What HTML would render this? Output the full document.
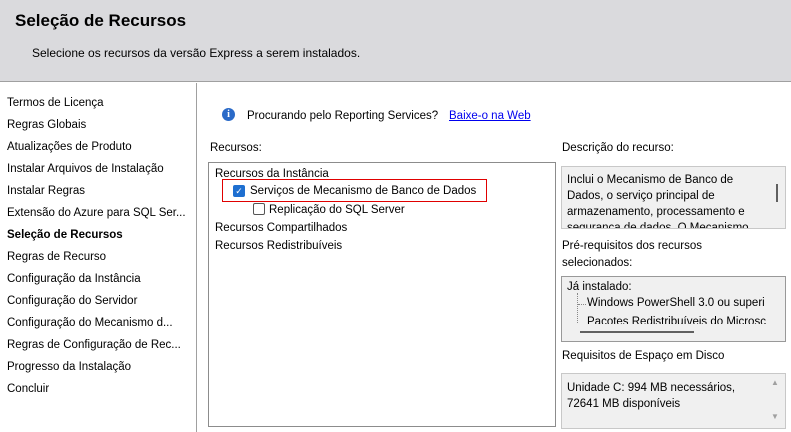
<!DOCTYPE html>
<html><head><style>
*{margin:0;padding:0;box-sizing:border-box}
body{width:791px;height:432px;overflow:hidden;background:#fff;font-family:"Liberation Sans",sans-serif;font-size:11.5px;color:#000;position:relative}
.a{position:absolute;white-space:nowrap}
#hdr{position:absolute;left:0;top:0;width:791px;height:82px;background:#dadadd;border-bottom:1px solid #a0a0a0}
.side div{position:absolute;left:7px}
.box{position:absolute;background:#f0f0f0;border:1px solid #c8c8c8;overflow:hidden}
</style></head><body>
<div id="hdr">
<div class="a" style="left:15px;top:11px;font-size:17px;font-weight:bold">Seleção de Recursos</div>
<div class="a" style="left:32px;top:46px;font-size:12px">Selecione os recursos da versão Express a serem instalados.</div>
</div>
<div style="position:absolute;left:196px;top:83px;width:1px;height:349px;background:#a0a0a0"></div>
<div class="side">
<div style="top:97px">Termos de Licença</div>
<div style="top:119px">Regras Globais</div>
<div style="top:141px">Atualizações de Produto</div>
<div style="top:163px">Instalar Arquivos de Instalação</div>
<div style="top:185px">Instalar Regras</div>
<div style="top:207px">Extensão do Azure para SQL Ser...</div>
<div style="top:229px;font-weight:bold">Seleção de Recursos</div>
<div style="top:251px">Regras de Recurso</div>
<div style="top:273px">Configuração da Instância</div>
<div style="top:295px">Configuração do Servidor</div>
<div style="top:317px">Configuração do Mecanismo d...</div>
<div style="top:339px">Regras de Configuração de Rec...</div>
<div style="top:361px">Progresso da Instalação</div>
<div style="top:383px">Concluir</div>
</div>
<div class="a" style="left:222px;top:108px;width:13px;height:13px;border-radius:50%;background:#2a6ac8;color:#fff;font-size:10px;font-weight:bold;text-align:center;line-height:13px;font-family:'Liberation Serif',serif">i</div>
<div class="a" style="left:247px;top:110px">Procurando pelo Reporting Services?</div>
<div class="a" style="left:449px;top:110px;color:#0000ee;text-decoration:underline">Baixe-o na Web</div>
<div class="a" style="left:210px;top:142px">Recursos:</div>
<div style="position:absolute;left:208px;top:162px;width:348px;height:265px;border:1px solid #8c8c8c;background:#fff"></div>
<div class="a" style="left:215px;top:168px">Recursos da Instância</div>
<div style="position:absolute;left:222px;top:179px;width:265px;height:23px;border:1px solid #e00000"></div>
<div class="a" style="left:233px;top:185px;width:12px;height:12px;background:#1e6fd0;border-radius:2px;color:#fff;font-size:9px;text-align:center;line-height:12px">✓</div>
<div class="a" style="left:250px;top:185px">Serviços de Mecanismo de Banco de Dados</div>
<div class="a" style="left:253px;top:203px;width:12px;height:12px;border:1px solid #555;border-radius:2px;background:#fff"></div>
<div class="a" style="left:269px;top:204px">Replicação do SQL Server</div>
<div class="a" style="left:215px;top:222px">Recursos Compartilhados</div>
<div class="a" style="left:215px;top:240px">Recursos Redistribuíveis</div>
<div class="a" style="left:562px;top:142px">Descrição do recurso:</div>
<div class="box" style="left:561px;top:166px;width:225px;height:63px">
<div class="a" style="left:5px;top:5px;line-height:16px;white-space:normal;width:200px">Inclui o Mecanismo de Banco de Dados, o serviço principal de armazenamento, processamento e segurança de dados. O Mecanismo</div>
<div class="a" style="left:214px;top:17px;width:2px;height:18px;background:#606060"></div>
</div>
<div class="a" style="left:562px;top:238px;line-height:17px">Pré-requisitos dos recursos<br>selecionados:</div>
<div class="box" style="left:561px;top:276px;width:225px;height:66px;border-color:#999">
<div class="a" style="left:5px;top:4px">Já instalado:</div>
<div class="a" style="left:15px;top:16px;width:1px;height:32px;border-left:1px dotted #888"></div>
<div class="a" style="left:16px;top:27px;width:8px;border-top:1px dotted #888"></div>
<div class="a" style="left:25px;top:20px">Windows PowerShell 3.0 ou superi</div>
<div class="a" style="left:25px;top:39px">Pacotes Redistribuíveis do Microsc</div>
<div class="a" style="left:0;top:47px;width:225px;height:19px;background:#f0f0f0"></div>
<div class="a" style="left:18px;top:54px;width:114px;height:2px;background:#606060"></div>
</div>
<div class="a" style="left:562px;top:350px">Requisitos de Espaço em Disco</div>
<div class="box" style="left:561px;top:373px;width:225px;height:56px">
<div class="a" style="left:5px;top:6px;line-height:16px">Unidade C: 994 MB necessários,<br>72641 MB disponíveis</div>
<div class="a" style="left:209px;top:4px;font-size:8px;color:#a0a0a0">▲</div>
<div class="a" style="left:209px;top:38px;font-size:8px;color:#a0a0a0">▼</div>
</div>
</body></html>
